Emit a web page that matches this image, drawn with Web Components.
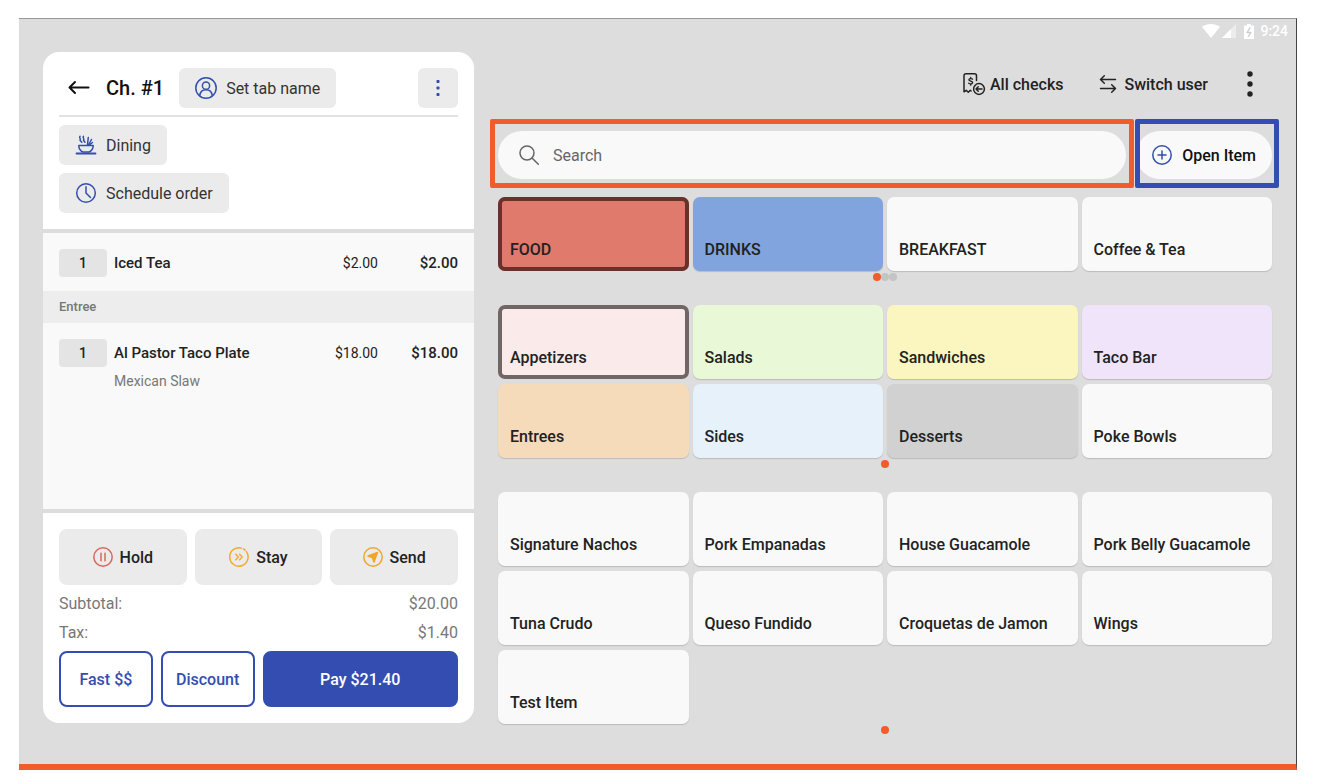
<!DOCTYPE html>
<html lang="en">
<head>
<meta charset="utf-8">
<meta name="viewport" content="width=device-width, initial-scale=1">
<title>Order screen</title>
<style>
    body {
        margin: 0;
        min-height: 100vh;
        box-sizing: border-box;
        padding: 18px 21px 15px 19px;
        display: flex;
        background: #fff;
        font-family: Roboto, "Liberation Sans", sans-serif;
        font-size: 16px;
        color: #222;
        --blue: #334eb0;
        --orange: #f05c2a;
        --chip: #ebebeb;
        --line: #dcdcdc;
        --tile: #f9f9f9;
    }
</style>
</head>
<body>

<pos-screen>
    <status-bar slot="status" time="9:24"></status-bar>

    <check-panel slot="check" number="Ch. #1">
        <order-list></order-list>
        <check-footer slot="footer"></check-footer>
    </check-panel>

    <top-nav slot="menu"></top-nav>
    <search-row slot="menu"></search-row>

    <tile-group slot="menu" pages="3" label="Menus">
        <menu-tile color="#e07a6c" ring="#66322b">FOOD</menu-tile>
        <menu-tile color="#81a4df">DRINKS</menu-tile>
        <menu-tile>BREAKFAST</menu-tile>
        <menu-tile>Coffee &amp; Tea</menu-tile>
    </tile-group>

    <tile-group slot="menu" pages="1" label="Groups">
        <menu-tile color="#faeaea" ring="#706666">Appetizers</menu-tile>
        <menu-tile color="#e9f8d6">Salads</menu-tile>
        <menu-tile color="#fbf5bf">Sandwiches</menu-tile>
        <menu-tile color="#f0e4fb">Taco Bar</menu-tile>
        <menu-tile color="#f6dbba">Entrees</menu-tile>
        <menu-tile color="#e6f1fa">Sides</menu-tile>
        <menu-tile color="#d1d1d1">Desserts</menu-tile>
        <menu-tile>Poke Bowls</menu-tile>
    </tile-group>

    <tile-group slot="menu" pages="1" label="Items">
        <menu-tile>Signature Nachos</menu-tile>
        <menu-tile>Pork Empanadas</menu-tile>
        <menu-tile>House Guacamole</menu-tile>
        <menu-tile>Pork Belly Guacamole</menu-tile>
        <menu-tile>Tuna Crudo</menu-tile>
        <menu-tile>Queso Fundido</menu-tile>
        <menu-tile>Croquetas de Jamon</menu-tile>
        <menu-tile>Wings</menu-tile>
        <menu-tile>Test Item</menu-tile>
    </tile-group>
</pos-screen>

<script>
const icons = {
    back: ['0 0 24 24', '<path d="M21.500 11.500H2.500M8 6L2.500 11.500L8 17" stroke-width="2"/>'],
    person: ['0 0 22 22', '<circle cx="11" cy="11" r="10.200"/><circle cx="11" cy="8.700" r="3.600"/><path d="M4.700 18.600c.5-3.600 3-5.800 6.300-5.800s5.800 2.200 6.300 5.800"/>'],
    dots: ['0 0 22 22', '<g fill="currentColor" stroke="none"><rect x="9.500" y="3" width="3" height="3" rx=".8"/><rect x="9.500" y="9.500" width="3" height="3" rx=".8"/><rect x="9.500" y="16" width="3" height="3" rx=".8"/></g>'],
    dining: ['0 0 22 22', '<path d="M1.500 19.500h19" stroke-width="1.800"/><path d="M3.800 11.500h14.400c0 3-1.700 5.400-4 6.500H7.800c-2.300-1.100-4-3.500-4-6.500z"/><path d="M5 2.200c-1.500 1.500 1.400 2.200 0 4l1.800 2M8.500 2.200c-1.500 1.500 1.400 2.200 0 4l1.500 2M12.500 10.500L13.300 3.500M13.500 11l3-5.500M15 10.500L17.500 8.500"/>'],
    clock: ['0 0 22 22', '<circle cx="11" cy="11" r="9.300"/><path d="M11 4.800V11l4.500 4.500"/>'],
    hold: ['0 0 20 20', '<circle cx="10" cy="10" r="9.200"/><path d="M8 6.200v7.600M12 6.200v7.600"/>'],
    stay: ['0 0 20 20', '<path d="M17.400 4.600A9.200 9.200 0 1 1 12.400 1.100M14.500 1.900l1.600 1.200"/><path d="M6.800 7.300L9.400 10l-2.600 2.700M10.600 7.300L13.200 10l-2.600 2.700"/>'],
    send: ['0 0 20 20', '<circle cx="10" cy="10" r="9.200"/><path d="M14.500 5.500L5 9l4.300 1.500L11 15z" fill="currentColor"/>'],
    checks: ['0 0 24 24', '<path d="M14.500 7V3.800c0-1.200-.7-2-2-2H4c-1.300 0-2 .8-2 2v16l2.200-1.500 2.100 2 2-2 .8.700M14.500 7v1.500" stroke-width="1.500"/><path d="M10.500 7.200c-.6-.7-3.600-1-3.600.6 0 1.700 3.700.8 3.700 2.700 0 1.700-3 1.600-4 .6M8.700 5.300v1M8.700 12v1.200" stroke-width="1.300"/><circle cx="17" cy="17" r="5.400" stroke-width="1.500"/><path d="M20 17h-6M16.200 14.800L14 17l2.200 2.200" stroke-width="1.500"/>'],
    swap: ['0 0 18 20', '<path d="M16.500 5.500H1.500M5.300 1.800L1.500 5.500l3.800 3.700M1.500 14.500h15M12.700 10.800l3.800 3.700-3.800 3.700"/>'],
    search: ['0 0 20 20', '<circle cx="8" cy="8" r="7"/><path d="M13 13l6.300 6.300"/>'],
    plus: ['0 0 20 20', '<circle cx="10" cy="10" r="9.200"/><path d="M10 6v8M6 10h8"/>'],
    more: ['0 0 6 26', '<g fill="currentColor" stroke="none"><circle cx="3" cy="3" r="2.700"/><circle cx="3" cy="13" r="2.700"/><circle cx="3" cy="23" r="2.700"/></g>'],
    wifi: ['0 0 18 14', '<path d="M9 14L0 2.800C5-.9 13-.9 18 2.800z" fill="currentColor" stroke="none"/>'],
    signal: ['0 0 14 14', '<path d="M14 0v14H0z" fill="currentColor" stroke="none" opacity=".45"/><path d="M9 5v9H0z" fill="currentColor" stroke="none"/>'],
    battery: ['0 0 10 15', '<path d="M3 0h4v1.500h3V15H0V1.500h3z" fill="currentColor" stroke="none"/><path d="M6 3.800L3 8.500h3.800L4.300 12.500" stroke="#ccc" stroke-width="1.300"/>']
}

// attaches an open shadow root with the given styles and markup
class PosElement extends HTMLElement {
    constructor() {
        super()
        this.attachShadow({ mode: 'open' })
    }

    render(style, html) {
        this.shadowRoot.innerHTML = `<style>${style}</style>${html}`
    }

    attr(name, fallback = '') {
        return this.getAttribute(name) || fallback
    }
}

class PosIcon extends PosElement {
    connectedCallback() {
        const [box, shape] = icons[this.attr('name')]
        const [, , w, h] = box.split(' ')
        this.render(`
            :host{
                display: block;
                flex: none;
            }
            svg{
                display: block;
                fill: none;
                stroke: currentColor;
                stroke-width: 1.500;
                stroke-linecap: round;
                stroke-linejoin: round;
            }
        `, `<svg width="${w}" height="${h}" viewBox="${box}" aria-hidden="true">${shape}</svg>`)
    }
}

class PosScreen extends PosElement {
    connectedCallback() {
        this.render(`
            :host{
                flex: 1;
                display: flex;
                flex-direction: column;
                background: #ddd;
                border-top: 1px solid #999;
                border-right: 1px solid #444;
                border-bottom: 6px solid var(--orange);
            }
            main{
                flex: 1;
                display: grid;
                grid-template-columns: minmax(0, 431fr) minmax(0, 774fr);
                gap: 24px;
                padding: 9px 24px 41px;
            }
            .check{
                display: grid;
            }
        `, `
            <slot name="status"></slot>
            <main>
                <div class="check"><slot name="check"></slot></div>
                <div class="menu"><slot name="menu"></slot></div>
            </main>
        `)
    }
}

class StatusBar extends PosElement {
    connectedCallback() {
        this.render(`
            :host{
                display: flex;
                justify-content: flex-end;
                align-items: center;
                height: 24px;
                padding-right: 8px;
                color: #fff;
                font-size: 14px;
                font-weight: 500;
            }
            .battery{
                margin: 0 6px 0 8px;
            }
            .signal{
                margin-left: 2px;
            }
        `, `
            <pos-icon name="wifi"></pos-icon>
            <pos-icon class="signal" name="signal"></pos-icon>
            <pos-icon class="battery" name="battery"></pos-icon>
            <span>${this.attr('time')}</span>
        `)
    }
}

// grey rounded button with an icon in front of its label
class ChipButton extends PosElement {
    connectedCallback() {
        this.render(`
            :host{
                display: block;
            }
            button{
                display: flex;
                align-items: center;
                justify-content: center;
                gap: 9px;
                height: 40px;
                padding: 0 16px;
                border: 0;
                border-radius: 6px;
                background: var(--chip);
                color: #333;
                font: inherit;
                cursor: pointer;
            }
            :host([square]) button{
                width: 40px;
                padding: 0;
            }
            :host([tall]) button{
                width: 100%;
                height: 56px;
                gap: 7px;
                border-radius: 8px;
                color: #222;
                font-weight: 500;
            }
            pos-icon{
                color: ${this.attr('tint', 'var(--blue)')};
            }
        `, `
            <button type="button" aria-label="${this.attr('label', this.textContent)}">
                <pos-icon name="${this.attr('icon')}"></pos-icon>
                <slot></slot>
            </button>
        `)
    }
}

class CheckPanel extends PosElement {
    connectedCallback() {
        this.render(`
            :host{
                display: flex;
                flex-direction: column;
                border-radius: 16px;
                background: #fff;
                overflow: hidden;
            }
            header{
                padding: 16px;
                border-bottom: 4px solid var(--line);
            }
            .title{
                display: flex;
                align-items: center;
                gap: 15px;
                padding-bottom: 7px;
                margin-bottom: 8px;
                border-bottom: 2px solid #e2e2e2;
            }
            .back{
                margin-right: -8px;
                padding: 8px;
                border: 0;
                background: none;
                color: #111;
                cursor: pointer;
            }
            h1{
                margin: 0;
                color: #111;
                font-size: 20px;
                font-weight: 500;
                white-space: nowrap;
            }
            .menu{
                margin-left: auto;
            }
            .options{
                display: flex;
                flex-direction: column;
                align-items: flex-start;
                gap: 8px;
            }
            .lines{
                flex: 1;
                background: #f9f9f9;
                border-bottom: 4px solid var(--line);
            }
        `, `
            <header>
                <div class="title">
                    <button class="back" type="button" aria-label="Back"><pos-icon name="back"></pos-icon></button>
                    <h1>${this.attr('number')}</h1>
                    <chip-button icon="person">Set tab name</chip-button>
                    <chip-button class="menu" icon="dots" square label="Check options"></chip-button>
                </div>
                <div class="options">
                    <chip-button icon="dining">Dining</chip-button>
                    <chip-button icon="clock">Schedule order</chip-button>
                </div>
            </header>
            <div class="lines"><slot></slot></div>
            <slot name="footer"></slot>
        `)
    }
}

const order = [
    { qty: 1, name: 'Iced Tea', price: '$2.00', total: '$2.00' },
    { course: 'Entree' },
    { qty: 1, name: 'Al Pastor Taco Plate', price: '$18.00', total: '$18.00', mod: 'Mexican Slaw' }
]

class OrderList extends PosElement {
    row(line) {
        if (line.course) {
            return `<tr class="course"><th colspan="4" scope="rowgroup">${line.course}</th></tr>`
        }
        return `
            <tr>
                <td class="qty"><span>${line.qty}</span></td>
                <td class="name">${line.name}${line.mod ? `<div class="mod">${line.mod}</div>` : ''}</td>
                <td class="price">${line.price}</td>
                <td class="total">${line.total}</td>
            </tr>
        `
    }

    connectedCallback() {
        this.render(`
            :host{
                display: block;
            }
            table{
                width: 100%;
                border-collapse: collapse;
                font-size: 14px;
                line-height: 28px;
            }
            td{
                padding: 16px 0 14px;
                vertical-align: top;
            }
            .qty{
                width: 55px;
                padding-left: 16px;
            }
            .qty span{
                display: block;
                width: 48px;
                border-radius: 4px;
                background: #e4e4e4;
                font-weight: 500;
                text-align: center;
            }
            .name,
            .total{
                font-size: 15px;
                font-weight: 500;
            }
            .mod{
                color: #777;
                font-size: 14px;
                font-weight: 400;
            }
            .price,
            .total{
                width: 64px;
                text-align: right;
            }
            .total{
                padding-right: 16px;
                padding-left: 16px;
            }
            .course th{
                padding: 0 16px;
                background: #ededed;
                color: #777;
                font-size: 13px;
                font-weight: 500;
                line-height: 32px;
                text-align: left;
            }
        `, `<table>${order.map(line => this.row(line)).join('')}</table>`)
    }
}

class CheckFooter extends PosElement {
    connectedCallback() {
        this.render(`
            :host{
                display: block;
                padding: 16px;
            }
            .actions{
                display: grid;
                grid-template-columns: repeat(3, 1fr);
                gap: 8px;
            }
            dl{
                display: grid;
                grid-template-columns: 1fr auto;
                margin: 4px 0;
                color: #777;
                line-height: 29px;
            }
            dd{
                margin: 0;
                text-align: right;
            }
            .pay{
                display: grid;
                grid-template-columns: 94fr 94fr 196fr;
                gap: 8px;
            }
            .pay button{
                height: 56px;
                padding: 0;
                border: 2px solid var(--blue);
                border-radius: 8px;
                background: #fff;
                color: var(--blue);
                font: inherit;
                font-weight: 500;
                cursor: pointer;
            }
            .pay .main{
                background: var(--blue);
                color: #fff;
            }
        `, `
            <div class="actions">
                <chip-button tall icon="hold" tint="#d9695a">Hold</chip-button>
                <chip-button tall icon="stay" tint="#f2ab2e">Stay</chip-button>
                <chip-button tall icon="send" tint="#f2a52a">Send</chip-button>
            </div>
            <dl>
                <dt>Subtotal:</dt><dd>$20.00</dd>
                <dt>Tax:</dt><dd>$1.40</dd>
            </dl>
            <div class="pay">
                <button type="button">Fast $$</button>
                <button type="button">Discount</button>
                <button type="button" class="main">Pay $21.40</button>
            </div>
        `)
    }
}

class TopNav extends PosElement {
    connectedCallback() {
        this.render(`
            :host{
                display: block;
            }
            nav{
                display: flex;
                justify-content: flex-end;
                align-items: center;
                gap: 36px;
                height: 64px;
                padding-right: 16px;
            }
            a,
            button{
                display: flex;
                align-items: center;
                padding: 0;
                border: 0;
                background: none;
                color: #222;
                font: inherit;
                font-weight: 500;
                text-decoration: none;
                cursor: pointer;
            }
            button{
                padding: 0 3px;
            }
            a{
                gap: 4px;
            }
            .switch{
                gap: 7px;
            }
        `, `
            <nav>
                <a href="#checks"><pos-icon name="checks"></pos-icon>All checks</a>
                <a class="switch" href="#user"><pos-icon name="swap"></pos-icon>Switch user</a>
                <button type="button" aria-label="More"><pos-icon name="more"></pos-icon></button>
            </nav>
        `)
    }
}

class SearchRow extends PosElement {
    connectedCallback() {
        this.render(`
            :host{
                display: flex;
                gap: 10px;
                margin: 15px 0 18px;
            }
            .search,
            .open{
                position: relative;
                display: flex;
                align-items: center;
                box-sizing: border-box;
                height: 48px;
                border: 0;
                border-radius: 24px;
                background: var(--tile);
                font: inherit;
            }
            .search{
                flex: 1;
                gap: 14px;
                padding: 0 21px;
                color: #666;
            }
            .open{
                gap: 10px;
                padding: 0 16px;
                color: #111;
                font-weight: 500;
                cursor: pointer;
            }
            .open pos-icon{
                color: var(--blue);
            }
            input{
                flex: 1;
                min-width: 0;
                padding: 0;
                border: 0;
                outline: 0;
                background: none;
                color: #222;
                font: inherit;
            }
            input::placeholder{
                color: #666;
                opacity: 1;
            }
            /* highlight frames that lie over both controls */
            .search::after,
            .open::after{
                content: '';
                position: absolute;
                inset: -12px -8px -9px;
                border: 5px solid var(--orange);
                border-radius: 2px;
                pointer-events: none;
            }
            .open::after{
                right: -7px;
                left: -1px;
                border-color: var(--blue);
            }
        `, `
            <label class="search">
                <pos-icon name="search"></pos-icon>
                <input type="search" placeholder="Search" aria-label="Search">
            </label>
            <button class="open" type="button"><pos-icon name="plus"></pos-icon>Open Item</button>
        `)
    }
}

class TileGroup extends PosElement {
    connectedCallback() {
        const pages = Number(this.attr('pages', '1'))
        this.render(`
            :host{
                display: block;
            }
            :host(:not(:last-of-type)){
                margin-bottom: 22px;
            }
            /* the last pager hangs into the padding below */
            :host(:last-of-type){
                margin-bottom: -13px;
            }
            .grid{
                display: grid;
                grid-template-columns: repeat(4, minmax(0, 1fr));
                gap: 5px 4px;
            }
            .pager{
                display: flex;
                justify-content: center;
                align-items: center;
                height: 12px;
            }
            .pager i{
                width: 8px;
                height: 8px;
                border-radius: 50%;
                background: #c4c4c4;
            }
            .pager i:first-child{
                background: var(--orange);
            }
        `, `
            <section aria-label="${this.attr('label')}">
                <div class="grid"><slot></slot></div>
                <div class="pager">${'<i></i>'.repeat(pages)}</div>
            </section>
        `)
    }
}

class MenuTile extends PosElement {
    connectedCallback() {
        const ring = this.attr('ring')
        this.render(`
            :host{
                display: block;
            }
            button{
                display: flex;
                align-items: flex-end;
                width: 100%;
                height: 74px;
                padding: 11px 12px;
                border: 0;
                border-radius: 7px;
                background: ${this.attr('color', 'var(--tile)')};
                box-shadow: ${ring ? `inset 0 0 0 4px ${ring}` : '0 1px 1px #bbb'};
                color: #222;
                font: inherit;
                font-weight: 500;
                line-height: 20px;
                text-align: left;
                cursor: pointer;
            }
        `, '<button type="button"><slot></slot></button>')
    }
}

customElements.define('pos-icon', PosIcon)
customElements.define('pos-screen', PosScreen)
customElements.define('status-bar', StatusBar)
customElements.define('chip-button', ChipButton)
customElements.define('check-panel', CheckPanel)
customElements.define('order-list', OrderList)
customElements.define('check-footer', CheckFooter)
customElements.define('top-nav', TopNav)
customElements.define('search-row', SearchRow)
customElements.define('tile-group', TileGroup)
customElements.define('menu-tile', MenuTile)
</script>
</body>
</html>
